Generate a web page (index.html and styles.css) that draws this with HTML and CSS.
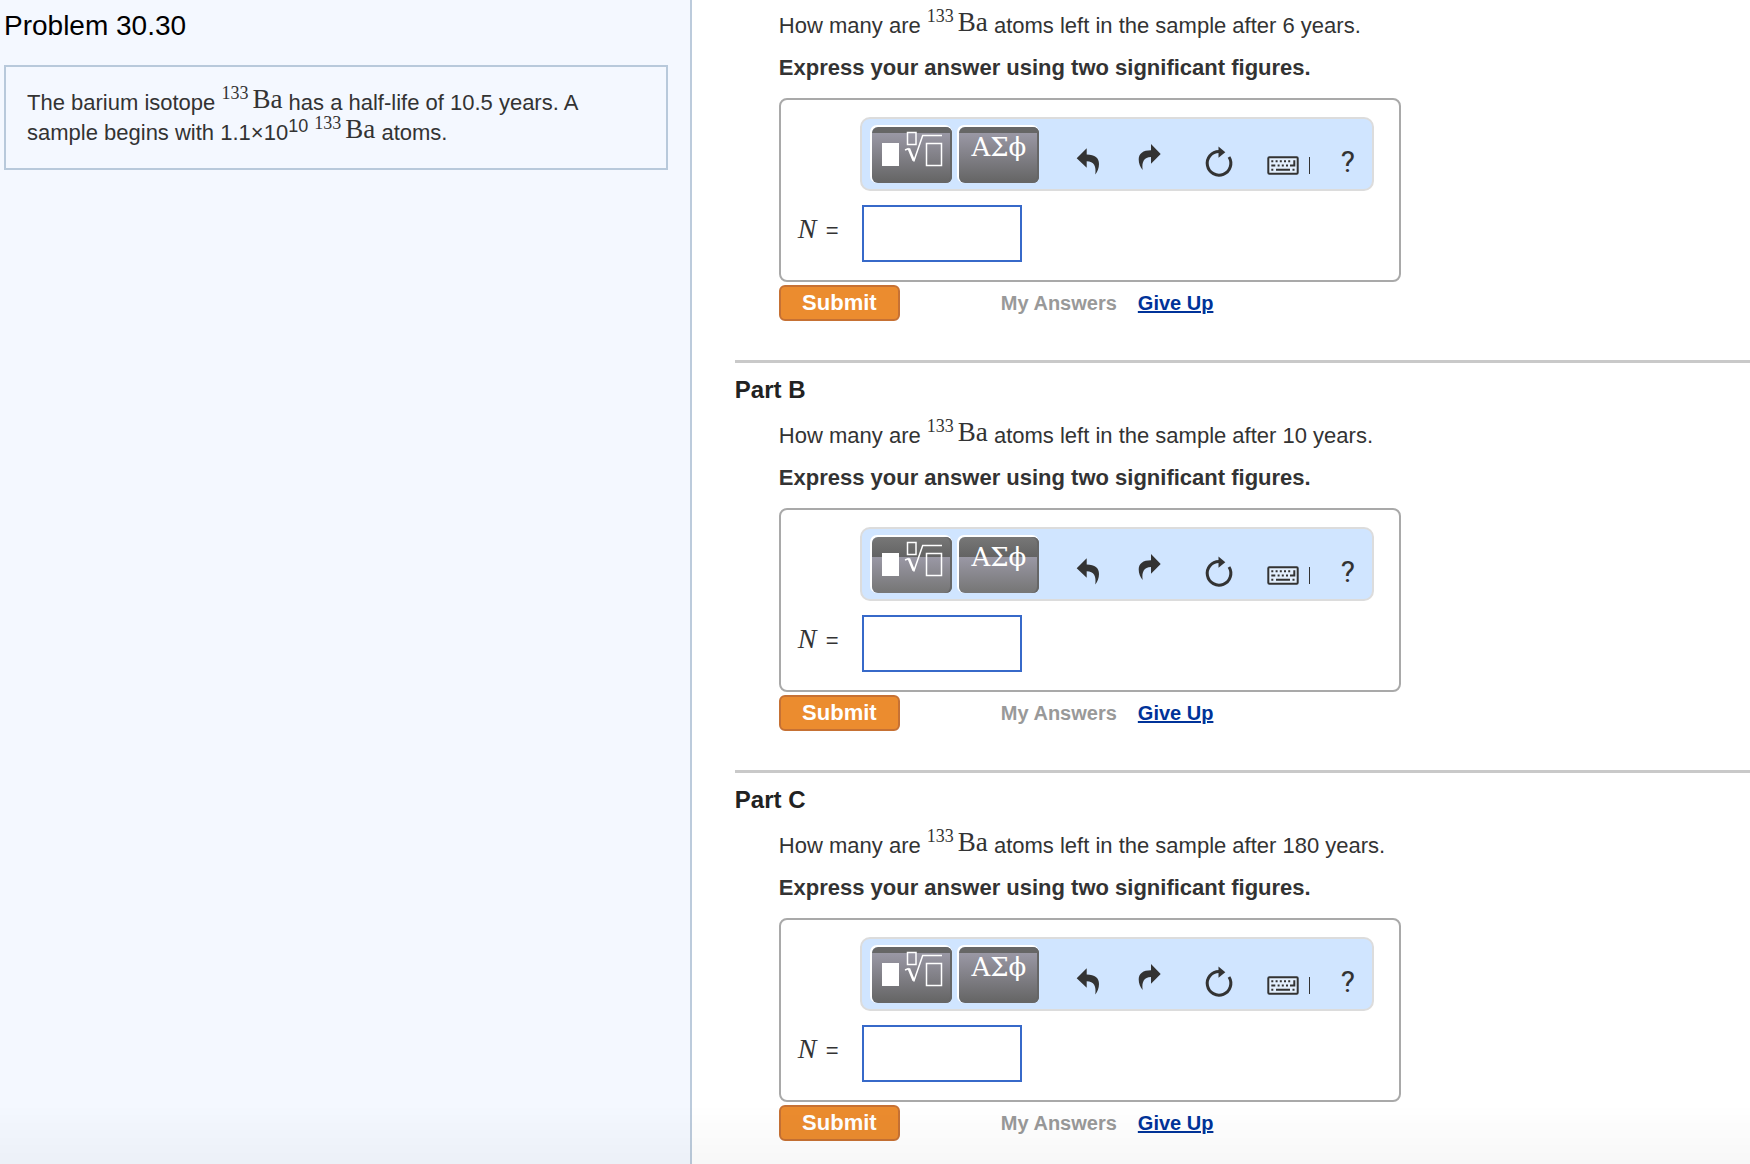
FILE: index.html
```html
<!DOCTYPE html>
<html lang="en">
<head>
    <meta charset="UTF-8">
    <meta name="viewport" content="width=device-width, initial-scale=1.0">
    <title>Problem 30.30</title>
    <link rel="stylesheet" href="styles.css">
</head>
<body>
    <!-- Icons shared by the answer toolbars -->
    <svg class="sprite" width="0" height="0" aria-hidden="true">
        <symbol id="icon-root" viewBox="0 0 80 56">
            <rect x="10" y="16" width="17" height="23" fill="#fff"/>
            <g fill="none" stroke="#fff" stroke-width="1.5">
                <rect x="35.5" y="5.5" width="8.5" height="12"/>
                <path d="M33 23 L36.8 21.5"/>
                <path d="M36.8 21.5 L41.7 33.5" stroke-width="2.6"/>
                <path d="M41.7 34.5 L50.7 8.5 H70"/>
                <rect x="54.5" y="16.5" width="15" height="22"/>
            </g>
        </symbol>
        <symbol id="icon-undo" viewBox="0 0 40 56">
            <path fill="#333" d="M8.7 31.3 L18.7 21.3 V27.5 C27 27.5 31 31 31 37 C31 41 29.5 44.5 27.3 47.5 C28.5 39 26 34.5 18.7 34.2 V40.7 Z"/>
        </symbol>
        <symbol id="icon-redo" viewBox="0 0 40 56">
            <path fill="#333" d="M27.7 27 L18 17 V23.2 C10 23.2 5.7 26.5 5.7 32.5 C5.7 36.5 7.3 40 9.7 43 C8.5 35 11 30.2 18 30 V36.7 Z"/>
        </symbol>
        <symbol id="icon-reset" viewBox="0 0 40 56">
            <path fill="none" stroke="#333" stroke-width="3" d="M31 30 A11.8 11.8 0 1 1 21 24.5"/>
            <path fill="#333" d="M20.5 19.5 L27.3 25.3 L20.5 30.7 Z"/>
        </symbol>
        <symbol id="icon-keyboard" viewBox="0 0 40 56">
            <rect x="5.3" y="30.3" width="29.4" height="16.4" rx="1" fill="#e3effd" stroke="#333" stroke-width="2"/>
            <path fill="none" stroke="#333" stroke-width="2" d="M8.3 34.2 h2 M12.6 34.2 h2 M16.8 34.2 h2 M21 34.2 h2 M25.2 34.2 h2 M8.3 38.4 h4 M14.6 38.4 h2 M18.8 38.4 h2 M23 38.4 h2 M27 38.4 h4.3 V33.2 M8.3 42.7 h2 M13 42.7 h14 M29.5 42.7 h2"/>
        </symbol>
    </svg>

    <div class="page">
        <aside class="intro">
            <h1>Problem 30.30</h1>
            <p class="statement">The barium isotope <span class="nuclide"><sup>133</sup>Ba</span> has a half-life of 10.5 years. A sample begins with 1.1×10<sup class="power">10</sup> <span class="nuclide"><sup>133</sup>Ba</span> atoms.</p>
        </aside>

        <main class="parts">
            <section class="part">
                <div class="part-body">
                    <p class="question">How many are <span class="nuclide"><sup>133</sup>Ba</span> atoms left in the sample after 6 years.</p>
                    <p class="instructions">Express your answer using two significant figures.</p>
                    <form class="answer-form">
                        <div class="answer-box">
                            <div class="toolbar">
                                <button type="button" class="palette" aria-label="Templates"><svg><use href="#icon-root"/></svg></button>
                                <button type="button" class="palette">ΑΣϕ</button>
                                <div class="tools">
                                    <button type="button" class="tool" aria-label="Undo"><svg><use href="#icon-undo"/></svg></button>
                                    <button type="button" class="tool" aria-label="Redo"><svg><use href="#icon-redo"/></svg></button>
                                    <button type="button" class="tool" aria-label="Reset"><svg><use href="#icon-reset"/></svg></button>
                                    <button type="button" class="tool" aria-label="Keyboard"><svg><use href="#icon-keyboard"/></svg></button>
                                    <span class="divider"></span>
                                    <button type="button" class="tool help">?</button>
                                </div>
                            </div>
                            <label for="answer-a"><i>N</i> =</label>
                            <input type="text" id="answer-a" class="answer">
                        </div>
                        <div class="actions">
                            <button type="submit" class="submit">Submit</button>
                            <span class="my-answers">My Answers</span>
                            <a href="#" class="give-up">Give Up</a>
                        </div>
                    </form>
                </div>
            </section>

            <section class="part">
                <h2>Part B</h2>
                <div class="part-body">
                    <p class="question">How many are <span class="nuclide"><sup>133</sup>Ba</span> atoms left in the sample after 10 years.</p>
                    <p class="instructions">Express your answer using two significant figures.</p>
                    <form class="answer-form">
                        <div class="answer-box">
                            <div class="toolbar">
                                <button type="button" class="palette wide-band" aria-label="Templates"><svg><use href="#icon-root"/></svg></button>
                                <button type="button" class="palette wide-band">ΑΣϕ</button>
                                <div class="tools">
                                    <button type="button" class="tool" aria-label="Undo"><svg><use href="#icon-undo"/></svg></button>
                                    <button type="button" class="tool" aria-label="Redo"><svg><use href="#icon-redo"/></svg></button>
                                    <button type="button" class="tool" aria-label="Reset"><svg><use href="#icon-reset"/></svg></button>
                                    <button type="button" class="tool" aria-label="Keyboard"><svg><use href="#icon-keyboard"/></svg></button>
                                    <span class="divider"></span>
                                    <button type="button" class="tool help">?</button>
                                </div>
                            </div>
                            <label for="answer-b"><i>N</i> =</label>
                            <input type="text" id="answer-b" class="answer">
                        </div>
                        <div class="actions">
                            <button type="submit" class="submit">Submit</button>
                            <span class="my-answers">My Answers</span>
                            <a href="#" class="give-up">Give Up</a>
                        </div>
                    </form>
                </div>
            </section>

            <section class="part">
                <h2>Part C</h2>
                <div class="part-body">
                    <p class="question">How many are <span class="nuclide"><sup>133</sup>Ba</span> atoms left in the sample after 180 years.</p>
                    <p class="instructions">Express your answer using two significant figures.</p>
                    <form class="answer-form">
                        <div class="answer-box">
                            <div class="toolbar">
                                <button type="button" class="palette" aria-label="Templates"><svg><use href="#icon-root"/></svg></button>
                                <button type="button" class="palette">ΑΣϕ</button>
                                <div class="tools">
                                    <button type="button" class="tool" aria-label="Undo"><svg><use href="#icon-undo"/></svg></button>
                                    <button type="button" class="tool" aria-label="Redo"><svg><use href="#icon-redo"/></svg></button>
                                    <button type="button" class="tool" aria-label="Reset"><svg><use href="#icon-reset"/></svg></button>
                                    <button type="button" class="tool" aria-label="Keyboard"><svg><use href="#icon-keyboard"/></svg></button>
                                    <span class="divider"></span>
                                    <button type="button" class="tool help">?</button>
                                </div>
                            </div>
                            <label for="answer-c"><i>N</i> =</label>
                            <input type="text" id="answer-c" class="answer">
                        </div>
                        <div class="actions">
                            <button type="submit" class="submit">Submit</button>
                            <span class="my-answers">My Answers</span>
                            <a href="#" class="give-up">Give Up</a>
                        </div>
                    </form>
                </div>
            </section>
        </main>
    </div>
</body>
</html>
```
FILE: styles.css
```css
* {
    margin: 0;
    padding: 0;
    box-sizing: border-box;
}

body {
    font-family: Arial, "Liberation Sans", sans-serif;
    font-size: 22px;
    line-height: 30px;
    color: #333;
    background: #fff;
}

button, input {
    font-family: inherit;
}

.sprite {
    position: absolute;
}

.page {
    display: grid;
    grid-template-columns: 17fr 26fr;
    min-height: 100vh;
}

/* soft shade along the bottom of the window */
.page::after {
    content: "";
    position: fixed;
    left: 0;
    right: 0;
    bottom: 0;
    height: 60px;
    background: linear-gradient(rgba(0, 0, 0, 0), rgba(0, 0, 0, 0.03));
    pointer-events: none;
}

/* Left pane */
.intro {
    background: #f4f8ff;
    border-right: 2px solid #bccbdc;
    padding: 10px 22px 0 4px;
}

h1 {
    font-size: 28px;
    font-weight: normal;
    color: #000;
    line-height: 32px;
    margin-bottom: 23px;
}

.statement {
    border: 2px solid #b8c9db;
    padding: 21px 21px 20px;
}

.nuclide {
    font-family: "Liberation Serif", serif;
    font-size: 27px;
    line-height: 0;
    vertical-align: 2px;
}

.nuclide sup {
    font-size: 18px;
    line-height: 0;
    vertical-align: 9px;
    margin-right: 4px;
}

.power {
    font-size: 18px;
    line-height: 0;
    vertical-align: 8px;
}

/* Right pane */
.parts {
    padding-left: 43px;
}

.part {
    padding-top: 11px;
    padding-bottom: 39px;
}

.part + .part {
    border-top: 3px solid #c9c9c9;
    padding-top: 12px;
}

.part:last-child {
    padding-bottom: 0;
}

h2 {
    font-size: 24px;
    line-height: 30px;
    color: #222;
    margin-bottom: 16px;
}

.part-body {
    padding-left: 44px;
}

.question {
    margin-bottom: 12px;
}

.instructions {
    font-weight: bold;
    margin-bottom: 15px;
}

.answer-box {
    display: grid;
    grid-template-columns: 62px auto;
    row-gap: 14px;
    align-items: center;
    width: fit-content;
    padding: 17px 25px 18px 17px;
    border: 2px solid #a9a9a9;
    border-radius: 8px;
}

.toolbar {
    grid-column: 2;
    display: flex;
    padding: 8px 4px 6px 10px;
    background: #d0e5ff;
    border: 2px solid #dcdcdc;
    border-radius: 10px;
}

.palette {
    width: 80px;
    height: 56px;
    display: flex;
    justify-content: center;
    border: none;
    border-radius: 6px;
    background: linear-gradient(#666 6px, #9a98a5 6px, #666 54px);
    box-shadow: -1px -1px 0 1px #fff, inset -2px 0 0 #666;
    color: #fff;
    font-family: "DejaVu Serif", serif;
    font-size: 26px;
    line-height: 40px;
    cursor: pointer;
}

.palette + .palette {
    margin-left: 7px;
}

.palette.wide-band {
    background: linear-gradient(#777 0, #636363 20px, #9a98a5 20px, #777 54px);
}

.palette svg {
    width: 80px;
    height: 56px;
    flex: none;
}

.tools {
    display: flex;
    align-items: center;
    margin-left: 29px;
}

.tool {
    width: 40px;
    height: 56px;
    background: none;
    border: none;
    color: #333;
    cursor: pointer;
}

.tool + .tool {
    margin-left: 25px;
}

.tool svg {
    display: block;
    width: 40px;
    height: 56px;
}

.divider {
    width: 1px;
    height: 17px;
    margin: 20px 18px 0 6px;
    background: #333;
}

.help {
    padding-top: 12px;
    font-family: Roboto, sans-serif;
    font-size: 30px;
}

label {
    font-size: 22px;
    padding-bottom: 8px;
}

label i {
    font-family: "Liberation Serif", serif;
    font-size: 28px;
    margin-right: 3px;
}

.answer {
    width: 160px;
    height: 57px;
    margin-left: 2px;
    padding: 0 8px;
    border: 2px solid #3769c9;
    background: #fff;
    font-size: 22px;
}

.actions {
    display: flex;
    align-items: center;
    margin-top: 3px;
    font-size: 20px;
    font-weight: bold;
}

.submit {
    width: 121px;
    height: 36px;
    background: #eb8c2f;
    border: 2px solid #c67134;
    border-radius: 6px;
    color: #fff;
    font-size: 22px;
    font-weight: bold;
    cursor: pointer;
}

.my-answers {
    margin-left: 101px;
    color: #999;
}

.give-up {
    margin-left: 21px;
    color: #039;
}
```
